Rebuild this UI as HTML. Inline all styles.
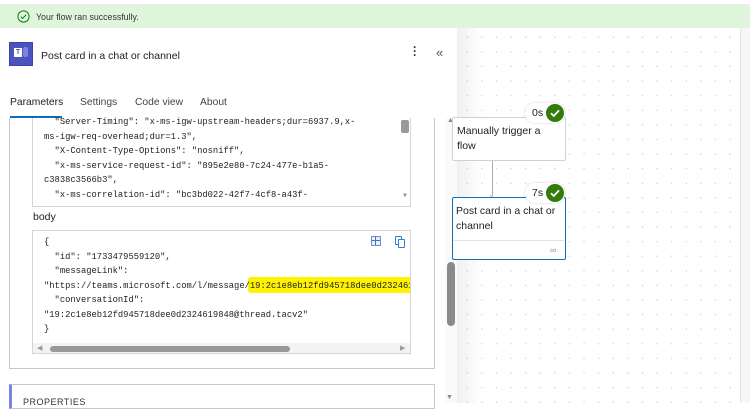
<!DOCTYPE html>
<html><head><meta charset="utf-8"><style>
*{margin:0;padding:0;box-sizing:border-box}
body{width:750px;height:403px;overflow:hidden;background:#fff;font-family:"Liberation Sans",sans-serif;position:relative}
.abs{position:absolute}
.canvas{left:457px;top:28px;width:283px;height:375px;background-color:#fff;background-image:radial-gradient(circle,#d2d2d2 0.6px,transparent 0.9px);background-size:14.6px 14.6px;background-position:3px 2px}
.shadow{left:457px;top:28px;width:25px;height:375px;background:linear-gradient(to right,rgba(0,0,0,0.06),rgba(0,0,0,0))}
.right{left:740px;top:28px;width:10px;height:375px;background:#f7f7f7;border-left:1px solid #e6e6e6}
.code{font-family:"Liberation Mono",monospace;font-size:8.8px;line-height:14.5px;color:#222;white-space:pre}
.node{background:#fff;border:1px solid #d0d0d0;border-radius:2px;font-size:10.5px;color:#222;line-height:15px}
.badge{background:#fff;border-radius:11px;height:20px;font-size:10.5px;color:#222;box-shadow:0 0 2px rgba(0,0,0,.2)}
.chk{width:18px;height:18px;border-radius:50%;background:#327b0c;position:absolute;right:1px;top:1px}
.tab{font-size:10.3px;color:#444;top:97px}
</style></head><body>
<div class="abs" style="left:0;top:0;width:750px;height:5px;background:#fff;border-bottom:1px solid #eee"></div>
<div class="abs" style="left:0;top:5px;width:750px;height:23px;background:#dff6dd"></div>
<svg class="abs" style="left:17px;top:10px" width="13" height="13" viewBox="0 0 13 13"><circle cx="6.5" cy="6.5" r="5.6" fill="none" stroke="#107c10" stroke-width="1"/><path d="M3.8 6.7l1.8 1.8 3.6-3.8" fill="none" stroke="#107c10" stroke-width="1"/></svg>
<div class="abs" style="left:36px;top:12px;font-size:8.8px;color:#333">Your flow ran successfully.</div>

<div class="abs canvas"></div>
<div class="abs shadow"></div>
<div class="abs right"></div>

<!-- panel -->
<div class="abs" style="left:0;top:28px;width:457px;height:375px;background:#fff"></div>
<div class="abs" style="left:9px;top:42px;width:24px;height:24px;background:#4b53bc;border:1px solid #3d44a8"></div>
<div class="abs" style="left:14px;top:48px;width:8px;height:9px;background:#fff;color:#4b53bc;font-size:7px;font-weight:bold;text-align:center;line-height:9px">T</div>
<div class="abs" style="left:23px;top:47px;width:5px;height:10px;background:#7b83eb;border-radius:2px"></div>
<div class="abs" style="left:41px;top:50px;font-size:10.5px;color:#222">Post card in a chat or channel</div>
<div class="abs" style="left:413px;top:45px;font-size:12px;color:#333;line-height:4px;font-weight:bold">·<br>·<br>·</div>
<div class="abs" style="left:436px;top:45px;font-size:13px;color:#555">«</div>
<div class="abs tab" style="left:10px;color:#222">Parameters</div>
<div class="abs tab" style="left:80px">Settings</div>
<div class="abs tab" style="left:135px">Code view</div>
<div class="abs tab" style="left:200px">About</div>
<div class="abs" style="left:10px;top:116px;width:52px;height:2px;background:#0f6cbd"></div>

<div class="abs" style="left:9px;top:118px;width:426px;height:251px;border:1px solid #c8c8c8;border-top:none"></div>
<div class="abs" style="left:32px;top:118px;width:379px;height:89px;border:1px solid #d5d5d5;border-top:none"></div>
<div class="abs code" style="left:44px;top:115px">  "Server-Timing": "x-ms-igw-upstream-headers;dur=6937.9,x-
ms-igw-req-overhead;dur=1.3",
  "X-Content-Type-Options": "nosniff",
  "x-ms-service-request-id": "895e2e80-7c24-477e-b1a5-
c3838c3566b3",
  "x-ms-correlation-id": "bc3bd022-42f7-4cf8-a43f-</div>
<div class="abs" style="left:401px;top:120px;width:8px;height:13px;background:#999;border-radius:2px"></div>
<div class="abs" style="left:402px;top:193px;font-size:6px;color:#888">▼</div>

<div class="abs" style="left:33px;top:211px;font-size:10.5px;color:#222">body</div>
<div class="abs" style="left:32px;top:230px;width:379px;height:124px;border:1px solid #d5d5d5;overflow:hidden">
<div class="abs" style="left:215px;top:46px;width:165px;height:16px;background:#fff200;border-radius:3px"></div>
<div class="abs code" style="left:11px;top:4px">{
  "id": "1733479559120",
  "messageLink":
"https://teams.microsoft.com/l/message/19:2c1e8eb12fd945718dee0d2324619848
  "conversationId":
"19:2c1e8eb12fd945718dee0d2324619848@thread.tacv2"
}</div>
<div class="abs" style="left:0;top:112px;width:379px;height:12px;background:#f3f3f3"></div>
<div class="abs" style="left:17px;top:115px;width:240px;height:6px;background:#999;border-radius:3px"></div>
<div class="abs" style="left:4px;top:113px;font-size:7px;color:#999">◀</div>
<div class="abs" style="left:367px;top:113px;font-size:7px;color:#999">▶</div>
<div class="abs" style="left:338px;top:5px;width:10px;height:10px;border:1px solid #6b8fd0;background:#e8eefa"></div>
<div class="abs" style="left:342px;top:6px;width:1px;height:8px;background:#4a70c0"></div>
<div class="abs" style="left:339px;top:9px;width:8px;height:1px;background:#4a70c0"></div>
<div class="abs" style="left:362px;top:5px;width:7px;height:9px;border:1.3px solid #2f7fd8;border-radius:1px"></div>
<div class="abs" style="left:365px;top:8px;width:7px;height:9px;border:1.3px solid #2f7fd8;border-radius:1px;background:#fff"></div>
</div>

<div class="abs" style="left:9px;top:384px;width:426px;height:25px;border:1px solid #c8c8c8;border-left:3px solid #7b83eb"></div>
<div class="abs" style="left:23px;top:397px;font-size:9px;color:#333;letter-spacing:.5px">PROPERTIES</div>

<!-- outer scrollbar -->
<div class="abs" style="left:445px;top:118px;width:12px;height:285px;background:#fafafa"></div>
<div class="abs" style="left:447px;top:262px;width:8px;height:64px;background:#8a8a8a;border-radius:4px"></div>
<div class="abs" style="left:447px;top:117px;font-size:7px;color:#888">▲</div>
<div class="abs" style="left:446px;top:394px;font-size:7px;color:#888">▼</div>

<!-- nodes -->
<div class="abs node" style="left:452px;top:117px;width:114px;height:44px;padding:6px 0 0 4px">Manually trigger a<br>flow</div>
<div class="abs" style="left:492px;top:161px;width:1px;height:35px;background:#aaa"></div>
<div class="abs" style="left:488px;top:191px;font-size:8px;color:#aaa;line-height:8px">⌄</div>
<div class="abs node" style="left:452px;top:197px;width:114px;height:63px;border:1.5px solid #0f6cbd;padding:6px 0 0 3px">Post card in a chat or<br>channel
<div class="abs" style="left:0;top:42px;width:111px;height:1px;background:#e3e3e3"></div>
<div class="abs" style="left:97px;top:45px;font-size:9px;color:#999">∞</div></div>
<div class="abs badge" style="left:525px;top:103px;width:40px"><span style="position:absolute;left:7px;top:4px">0s</span><div class="chk"><svg width="18" height="18"><path d="M5 9.2l2.8 2.8 5.2-5.6" fill="none" stroke="#fff" stroke-width="1.8"/></svg></div></div>
<div class="abs badge" style="left:525px;top:183px;width:40px"><span style="position:absolute;left:7px;top:4px">7s</span><div class="chk"><svg width="18" height="18"><path d="M5 9.2l2.8 2.8 5.2-5.6" fill="none" stroke="#fff" stroke-width="1.8"/></svg></div></div>
</body></html>
